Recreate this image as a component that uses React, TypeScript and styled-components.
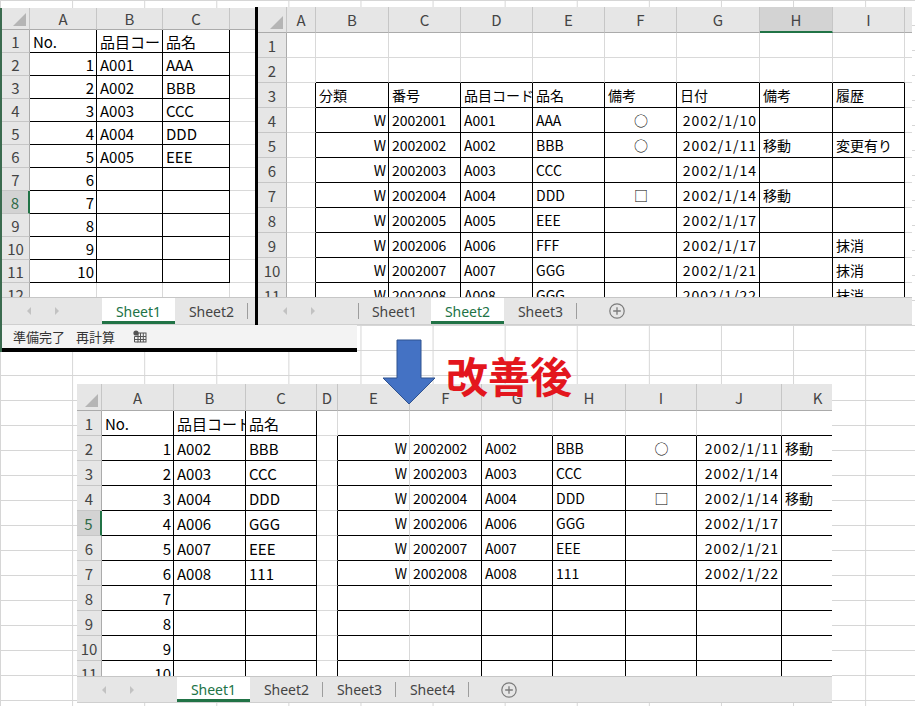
import React from 'react';
import styled, { createGlobalStyle } from 'styled-components';

const GlobalStyle = createGlobalStyle`
  html, body { margin: 0; padding: 0; background: #fff; }
  body { font-family: "Noto Sans CJK JP", "Noto Sans", sans-serif; }
`;

const CJK = `"Noto Sans CJK JP", "Noto Sans", sans-serif`;
const GRID = '#d9d9d9';
const GREEN = '#217346';
const HEAD_BG = '#e6e6e6';

type Align = 'left' | 'right' | 'center';
type Col = { label: string; w: number; align?: Align; fs?: number; ls?: number; join?: boolean; sel?: boolean };
type Row = { n: number; v: string[]; box: string; sel?: boolean; head?: boolean };

type SheetProps = {
    cols: Col[]
    rows: Row[]
    rnW: number
    headH: number
    rowH: number
    height: number
}

// one spreadsheet grid, cells get black borders where the row mask has an 'x'
const Sheet: React.FC<SheetProps> = ({ cols, rows, rnW, headH, rowH, height }) => {
    const tmpl = [rnW, ...cols.map(c => c.w)].map(w => `${w}px`).join(' ');
    const boxed = (ri: number, ci: number) => rows[ri]?.box[ci] === 'x';

    return (
        <GridArea $h={height}>
            <Grid $tmpl={tmpl} $head={headH} $row={rowH}>
                <Corner />
                {cols.map(c => <ColHead key={c.label} $sel={!!c.sel}>{c.label}</ColHead>)}
                {rows.map((r, ri) => (
                    <React.Fragment key={r.n}>
                        <RowHead $sel={!!r.sel}>{r.n}</RowHead>
                        {cols.map((c, ci) => {
                            const me = boxed(ri, ci);
                            const right = !c.join && (me || boxed(ri, ci + 1)) ? '#000' : GRID;
                            const bottom = me || boxed(ri + 1, ci) ? '#000' : GRID;
                            return (
                                <Cell
                                    key={ci}
                                    $r={right}
                                    $b={bottom}
                                    $align={r.head ? 'left' : c.align ?? 'left'}
                                    $fs={c.fs ?? 15}
                                    $ls={r.head ? 0 : c.ls ?? 0}
                                >
                                    {r.v[ci]}
                                </Cell>
                            );
                        })}
                    </React.Fragment>
                ))}
            </Grid>
        </GridArea>
    );
};

type TabsProps = { tabs: string[]; active: number; h: number };

const Tabs: React.FC<TabsProps> = ({ tabs, active, h }) => (
    <TabBar $h={h}>
        <Nav>
            <NavArrow $dir="l" />
            <NavArrow $dir="r" />
        </Nav>
        {tabs.map((t, i) => (
            <Tab
                key={t}
                $active={i === active}
                $sepL={i === 0 && i !== active}
                $sepR={i !== active && i + 1 !== active}
            >
                {t}
            </Tab>
        ))}
        <AddSheet>
            <svg width="16" height="16" viewBox="0 0 16 16">
                <circle cx="8" cy="8" r="7.2" fill="none" stroke="#7b7b7b" strokeWidth="1.2" />
                <path d="M8 4.2v7.6M4.2 8h7.6" stroke="#7b7b7b" strokeWidth="1.3" />
            </svg>
        </AddSheet>
    </TabBar>
);

const empty = (n: number) => Array.from({ length: n }, () => '');

const tlRows: Row[] = [
    { n: 1, head: true, v: ['No.', '品目コード', '品名', ''], box: 'xxx.' },
    { n: 2, v: ['1', 'A001', 'AAA', ''], box: 'xxx.' },
    { n: 3, v: ['2', 'A002', 'BBB', ''], box: 'xxx.' },
    { n: 4, v: ['3', 'A003', 'CCC', ''], box: 'xxx.' },
    { n: 5, v: ['4', 'A004', 'DDD', ''], box: 'xxx.' },
    { n: 6, v: ['5', 'A005', 'EEE', ''], box: 'xxx.' },
    { n: 7, v: ['6', '', '', ''], box: 'xxx.' },
    { n: 8, v: ['7', '', '', ''], box: 'xxx.', sel: true },
    { n: 9, v: ['8', '', '', ''], box: 'xxx.' },
    { n: 10, v: ['9', '', '', ''], box: 'xxx.' },
    { n: 11, v: ['10', '', '', ''], box: 'xxx.' },
    { n: 12, v: empty(4), box: '....' },
];

const tlCols: Col[] = [
    { label: 'A', w: 67, align: 'right' },
    { label: 'B', w: 66 },
    { label: 'C', w: 67 },
    { label: 'D', w: 72 },
];

const trData = [
    ['W', '2002001', 'A001', 'AAA', '○', '2002/1/10', '', ''],
    ['W', '2002002', 'A002', 'BBB', '○', '2002/1/11', '移動', '変更有り'],
    ['W', '2002003', 'A003', 'CCC', '', '2002/1/14', '', ''],
    ['W', '2002004', 'A004', 'DDD', '□', '2002/1/14', '移動', ''],
    ['W', '2002005', 'A005', 'EEE', '', '2002/1/17', '', ''],
    ['W', '2002006', 'A006', 'FFF', '', '2002/1/17', '', '抹消'],
    ['W', '2002007', 'A007', 'GGG', '', '2002/1/21', '', '抹消'],
    ['W', '2002008', 'A008', 'GGG', '', '2002/1/22', '', '抹消'],
    ['', '', '', '', '', '', '', ''],
];

const trBox = '.xxxxxxxx.';
const trRows: Row[] = [
    { n: 1, v: empty(10), box: '..........' },
    { n: 2, v: empty(10), box: '..........' },
    { n: 3, head: true, v: ['', '分類', '番号', '品目コード', '品名', '備考', '日付', '備考', '履歴', ''], box: trBox },
    ...trData.map((d, i) => ({ n: i + 4, v: ['', ...d, ''], box: trBox })),
];

const trCols: Col[] = [
    { label: 'A', w: 29, fs: 14 },
    { label: 'B', w: 73, align: 'right', fs: 14 },
    { label: 'C', w: 72, fs: 14 },
    { label: 'D', w: 72, fs: 14 },
    { label: 'E', w: 72, fs: 14 },
    { label: 'F', w: 72, align: 'center', fs: 14 },
    { label: 'G', w: 83, align: 'right', fs: 14, ls: 1 },
    { label: 'H', w: 73, fs: 14, sel: true },
    { label: 'I', w: 72, fs: 14 },
    { label: 'J', w: 72, fs: 14 },
];

const btData = [
    ['1', 'A002', 'BBB', '', 'W', '2002002', 'A002', 'BBB', '○', '2002/1/11', '移動'],
    ['2', 'A003', 'CCC', '', 'W', '2002003', 'A003', 'CCC', '', '2002/1/14', ''],
    ['3', 'A004', 'DDD', '', 'W', '2002004', 'A004', 'DDD', '□', '2002/1/14', '移動'],
    ['4', 'A006', 'GGG', '', 'W', '2002006', 'A006', 'GGG', '', '2002/1/17', ''],
    ['5', 'A007', 'EEE', '', 'W', '2002007', 'A007', 'EEE', '', '2002/1/21', ''],
    ['6', 'A008', '111', '', 'W', '2002008', 'A008', '111', '', '2002/1/22', ''],
    ['7', ...empty(10)],
    ['8', ...empty(10)],
    ['9', ...empty(10)],
    ['10', ...empty(10)],
    ['11', ...empty(10)],
];

const btRows: Row[] = [
    { n: 1, head: true, v: ['No.', '品目コード', '品名', ...empty(8)], box: 'xxx........' },
    ...btData.map((d, i) => ({ n: i + 2, v: d, box: 'xxx.xxxxxxx', sel: i + 2 === 5 })),
];

const btCols: Col[] = [
    { label: 'A', w: 72, align: 'right' },
    { label: 'B', w: 72 },
    { label: 'C', w: 71 },
    { label: 'D', w: 21 },
    { label: 'E', w: 72, align: 'right', fs: 14, join: true },
    { label: 'F', w: 72, fs: 14 },
    { label: 'G', w: 71, fs: 14 },
    { label: 'H', w: 73, fs: 14 },
    { label: 'I', w: 71, align: 'center', fs: 14 },
    { label: 'J', w: 85, align: 'right', fs: 14, ls: 1 },
    { label: 'K', w: 72, fs: 14 },
];

const App: React.FC = () => (
    <>
        <GlobalStyle />
        <Desktop>
            <Win $x={0} $y={8} $w={357} $z={1} $edge="2px solid #3b6b4f">
                <Sheet cols={tlCols} rows={tlRows} rnW={28} headH={22} rowH={23} height={289} />
                <Tabs tabs={['Sheet1', 'Sheet2']} active={0} h={28} />
                <StatusBar>
                    <StatusText $gap={11}>準備完了</StatusText>
                    <StatusText $gap={18}>再計算</StatusText>
                    <svg width="14" height="13" viewBox="0 0 14 13">
                        <circle cx="3" cy="3" r="2.6" fill="#555" />
                        <rect x="5" y="3" width="8" height="9" fill="none" stroke="#555" strokeWidth="1" />
                        <path d="M1.5 6.5h11.5M1.5 9.5h11.5M7.5 3v9M10.3 3v9M1.5 6.5v5.5h3.5" stroke="#555" strokeWidth="1" fill="none" />
                    </svg>
                </StatusBar>
            </Win>

            <Win $x={255} $y={7} $w={657} $z={2} $edge="3px solid #000">
                <Sheet cols={trCols} rows={trRows} rnW={29} headH={26} rowH={25} height={290} />
                <Tabs tabs={['Sheet1', 'Sheet2', 'Sheet3']} active={1} h={28} />
            </Win>

            <Win $x={77} $y={384} $w={755} $z={3} $edge="none">
                <Sheet cols={btCols} rows={btRows} rnW={25} headH={27} rowH={25} height={292} />
                <Tabs tabs={['Sheet1', 'Sheet2', 'Sheet3', 'Sheet4']} active={0} h={27} />
            </Win>

            <DownArrow width="56" height="70" viewBox="0 0 56 70">
                <path d="M16 2H40V40H54L28 66L2 40H16Z" fill="#4472c4" stroke="#2f528f" strokeWidth="1" />
            </DownArrow>
            <Caption>改善後</Caption>
        </Desktop>
    </>
);

export default App;


const Desktop = styled.div`
    position: relative;
    width: 915px;
    height: 706px;
    overflow: hidden;
    background-color: #fff;
    background-image:
        linear-gradient(to right, #d6d6d6 1px, transparent 1px),
        linear-gradient(to bottom, #d6d6d6 1px, transparent 1px);
    background-size: 72.1px 25px;
    font-family: ${CJK};
`

const Win = styled.div<{ $x: number; $y: number; $w: number; $z: number; $edge: string }>`
    position: absolute;
    left: ${p => p.$x}px;
    top: ${p => p.$y}px;
    width: ${p => p.$w}px;
    z-index: ${p => p.$z};
    box-sizing: border-box;
    border-left: ${p => p.$edge};
    display: flex;
    flex-direction: column;
    background: #fff;
`

const GridArea = styled.div<{ $h: number }>`
    flex: none;
    height: ${p => p.$h}px;
    overflow: hidden;
    background: #fff;
`

const Grid = styled.div<{ $tmpl: string; $head: number; $row: number }>`
    display: grid;
    width: max-content;
    grid-template-columns: ${p => p.$tmpl};
    grid-template-rows: ${p => p.$head}px;
    grid-auto-rows: ${p => p.$row}px;
`

const Corner = styled.div`
    position: relative;
    box-sizing: border-box;
    background: ${HEAD_BG};
    border-right: 1px solid #c6c6c6;
    border-bottom: 1px solid #ababab;

    &::after {
        content: '';
        position: absolute;
        right: 3px;
        bottom: 3px;
        border-style: solid;
        border-width: 0 0 13px 13px;
        border-color: transparent transparent #b5b5b5 transparent;
    }
`

const ColHead = styled.div<{ $sel: boolean }>`
    box-sizing: border-box;
    display: flex;
    align-items: center;
    justify-content: center;
    background: ${p => p.$sel ? '#d3d3d3' : HEAD_BG};
    border-right: 1px solid #c6c6c6;
    border-bottom: ${p => p.$sel ? `2px solid ${GREEN}` : '1px solid #ababab'};
    color: #444;
    font-size: 15px;
    overflow: hidden;
`

const RowHead = styled.div<{ $sel: boolean }>`
    box-sizing: border-box;
    display: flex;
    align-items: center;
    justify-content: center;
    background: ${p => p.$sel ? '#d3d3d3' : HEAD_BG};
    border-right: ${p => p.$sel ? `2px solid ${GREEN}` : '1px solid #ababab'};
    border-bottom: 1px solid #c6c6c6;
    color: ${p => p.$sel ? '#2f6a47' : '#444'};
    font-size: 15px;
    overflow: hidden;
`

const Cell = styled.div<{ $r: string; $b: string; $align: Align; $fs: number; $ls: number }>`
    box-sizing: border-box;
    display: flex;
    align-items: center;
    justify-content: ${p => p.$align === 'right' ? 'flex-end' : p.$align === 'center' ? 'center' : 'flex-start'};
    padding: 0 2px 0 3px;
    border-right: 1px solid ${p => p.$r};
    border-bottom: 1px solid ${p => p.$b};
    font-size: ${p => p.$fs}px;
    letter-spacing: ${p => p.$ls}px;
    color: #000;
    white-space: nowrap;
    overflow: hidden;
`

const TabBar = styled.div<{ $h: number }>`
    flex: none;
    height: ${p => p.$h}px;
    box-sizing: border-box;
    display: flex;
    align-items: stretch;
    background: ${HEAD_BG};
    border-top: 1px solid #c6c6c6;
    border-bottom: 1px solid #cfcfcf;
    font-family: "Noto Sans", sans-serif;
    font-size: 14px;
    color: #444;
`

const Nav = styled.div`
    flex: none;
    width: 100px;
    box-sizing: border-box;
    display: flex;
    align-items: center;
    gap: 24px;
    padding-left: 25px;
`

const NavArrow = styled.span<{ $dir: 'l' | 'r' }>`
    width: 0;
    height: 0;
    border-top: 4px solid transparent;
    border-bottom: 4px solid transparent;
    ${p => p.$dir === 'l' ? 'border-right: 4px solid #c2c2c2;' : 'border-left: 4px solid #c2c2c2;'}
`

const Tab = styled.div<{ $active: boolean; $sepL: boolean; $sepR: boolean }>`
    flex: none;
    width: 73px;
    position: relative;
    box-sizing: border-box;
    display: flex;
    align-items: center;
    justify-content: center;
    background: ${p => p.$active ? '#fff' : 'transparent'};
    color: ${p => p.$active ? GREEN : '#444'};
    border-bottom: 3px solid ${p => p.$active ? GREEN : 'transparent'};
    padding-top: 3px;

    &::before, &::after {
        content: '';
        position: absolute;
        top: 5px;
        bottom: 2px;
        width: 1px;
        background: #9d9d9d;
    }
    &::before {
        left: 0;
        display: ${p => p.$sepL ? 'block' : 'none'};
    }
    &::after {
        right: 0;
        display: ${p => p.$sepR ? 'block' : 'none'};
    }
`

const AddSheet = styled.div`
    flex: none;
    display: flex;
    align-items: center;
    margin-left: 32px;
`

const StatusBar = styled.div`
    flex: none;
    height: 23px;
    display: flex;
    align-items: center;
    padding-left: 11px;
    background: #f3f3f3;
    border-bottom: 4px solid #000;
    font-size: 13px;
    color: #333;
`

const StatusText = styled.span<{ $gap: number }>`
    margin-right: ${p => p.$gap}px;
`

const DownArrow = styled.svg`
    position: absolute;
    left: 381px;
    top: 338px;
    z-index: 4;
`

const Caption = styled.div`
    position: absolute;
    left: 446px;
    top: 354px;
    z-index: 4;
    font-size: 42px;
    line-height: 42px;
    font-weight: 700;
    color: #e3161d;
    white-space: nowrap;
`
